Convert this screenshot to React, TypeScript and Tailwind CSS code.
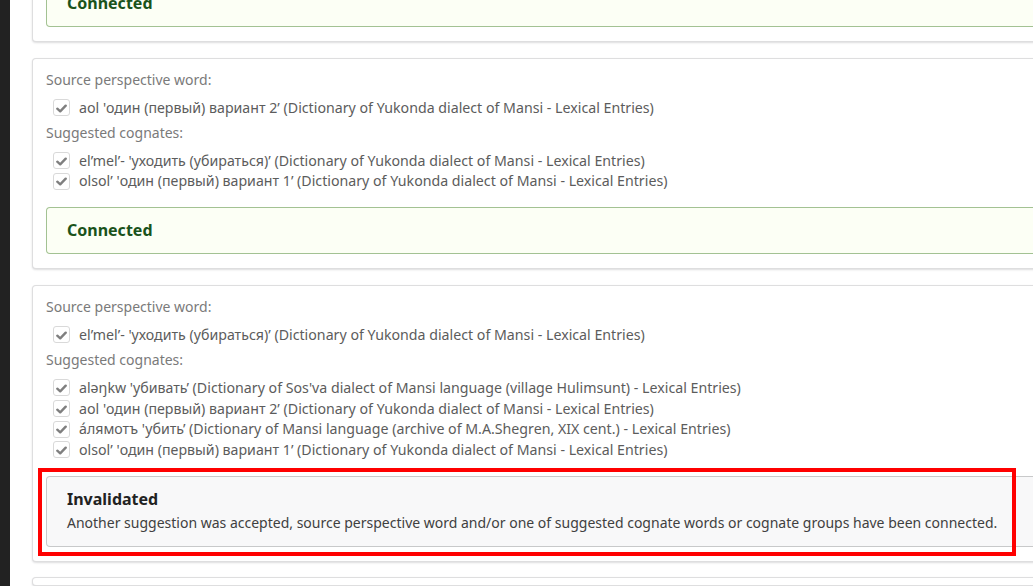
import React from "react";

const font = { fontFamily: '"Noto Sans", "Open Sans", sans-serif' };

function Check() {
  return (
    <span className="flex h-[17px] w-[17px] shrink-0 items-center justify-center rounded-[3px] border border-[#d9d9d9] bg-white">
      <svg width="11" height="9" viewBox="0 0 11 9" className="mt-[1px]">
        <path d="M1.3 4.7 L4.2 7.3 L9.7 1.7" fill="none" stroke="#7f7f7f" strokeWidth="2.4" strokeLinecap="round" strokeLinejoin="round" />
      </svg>
    </span>
  );
}

function Row({ text }: { text: string }) {
  return (
    <div className="flex h-[20.6px] items-center pl-[7px]">
      <Check />
      <span className="ml-[9px] whitespace-nowrap text-[14.2px] leading-[20px] text-[#5c5c5c]">{text}</span>
    </div>
  );
}

function Label({ text }: { text: string }) {
  return <div className="h-[20px] whitespace-nowrap text-[14px] leading-[20px] text-[#7a7a7a]">{text}</div>;
}

function Connected() {
  return (
    <div className="rounded-[4px] bg-[#fcfff5] px-[21px] py-[14px] text-[16px] font-bold leading-[19px] text-[#1a531b] shadow-[inset_0_0_0_1px_#a3c293]">
      Connected
    </div>
  );
}

function Card({ children, className = "" }: { children: React.ReactNode; className?: string }) {
  return (
    <div
      className={
        "w-[1100px] rounded-[4px] border border-[rgba(34,36,38,0.15)] bg-white pl-[13px] pr-[14px] shadow-[0_1px_2px_0_rgba(34,36,38,0.15)] " +
        className
      }
    >
      {children}
    </div>
  );
}

function Suggestion({ source, cognates, children }: { source: string; cognates: string[]; children: React.ReactNode }) {
  return (
    <Card className="pt-[11.5px] pb-[14px]">
      <Label text="Source perspective word:" />
      <div className="mt-[7.5px]">
        <Row text={source} />
      </div>
      <div className="mt-[5px]">
        <Label text="Suggested cognates:" />
      </div>
      <div className="mt-[7.5px] flex flex-col">
        {cognates.map((c) => (
          <Row key={c} text={c} />
        ))}
      </div>
      <div className="mt-[15.5px]">{children}</div>
    </Card>
  );
}

export default function App() {
  return (
    <div className="flex h-[586px] w-[1033px] overflow-hidden bg-white" style={font}>
      <div className="h-full w-[10px] shrink-0 bg-[#222222]" />
      <div className="flex flex-col gap-[15.3px] pl-[22px]">
        <Card className="-mt-[34.8px] pt-[14px] pb-[14px]">
          <Connected />
        </Card>
        <Suggestion
          source="aol 'один (первый) вариант 2’ (Dictionary of Yukonda dialect of Mansi - Lexical Entries)"
          cognates={[
            "el’mel’- 'уходить (убираться)’ (Dictionary of Yukonda dialect of Mansi - Lexical Entries)",
            "olsol’ 'один (первый) вариант 1’ (Dictionary of Yukonda dialect of Mansi - Lexical Entries)",
          ]}
        >
          <Connected />
        </Suggestion>
        <Suggestion
          source="el’mel’- 'уходить (убираться)’ (Dictionary of Yukonda dialect of Mansi - Lexical Entries)"
          cognates={[
            "aləŋkw 'убивать’ (Dictionary of Sos'va dialect of Mansi language (village Hulimsunt) - Lexical Entries)",
            "aol 'один (первый) вариант 2’ (Dictionary of Yukonda dialect of Mansi - Lexical Entries)",
            "а́лямотъ 'убить’ (Dictionary of Mansi language (archive of M.A.Shegren, XIX cent.) - Lexical Entries)",
            "olsol’ 'один (первый) вариант 1’ (Dictionary of Yukonda dialect of Mansi - Lexical Entries)",
          ]}
        >
          <div className="relative">
            <div className="rounded-[4px] bg-[#f8f8f9] px-[21px] py-[14px] shadow-[inset_0_0_0_1px_rgba(34,36,38,0.22)]">
              <div className="text-[16px] font-bold leading-[19px] text-[#222222]">Invalidated</div>
              <p className="mt-[4.5px] whitespace-nowrap text-[14px] leading-[20px] text-[#404040]">
                Another suggestion was accepted, source perspective word and/or one of suggested cognate words or cognate groups have been connected.
              </p>
            </div>
            <div className="pointer-events-none absolute left-[-8px] top-[-8px] h-[88px] w-[978px] border-[4px] border-[#ff0000]" />
          </div>
        </Suggestion>
        <Card className="h-[60px]">
          <div />
        </Card>
      </div>
    </div>
  );
}
